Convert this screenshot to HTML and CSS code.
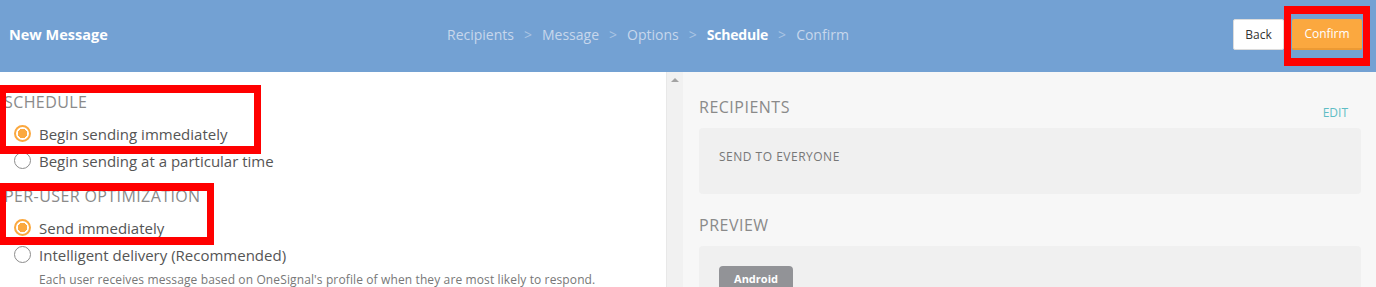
FILE: index.html
```html
<!DOCTYPE html>
<html>
<head>
<meta charset="utf-8">
<title>New Message</title>
<link rel="stylesheet" href="styles.css">
</head>
<body>
    <header class="topbar">
        <div class="title">New Message</div>
        <nav class="steps">
            <span class="step">Recipients</span>
            <span class="sep">&gt;</span>
            <span class="step">Message</span>
            <span class="sep">&gt;</span>
            <span class="step">Options</span>
            <span class="sep">&gt;</span>
            <span class="step active">Schedule</span>
            <span class="sep">&gt;</span>
            <span class="step">Confirm</span>
        </nav>
        <div class="actions">
            <button class="btn btn-back">Back</button>
            <button class="btn btn-confirm">Confirm</button>
        </div>
        <div class="mark mark-confirm"></div>
    </header>

    <main class="layout">
        <section class="form-pane">
            <h2 class="group-title">Schedule</h2>
            <label class="radio-row"><span class="radio checked"></span>Begin sending immediately</label>
            <label class="radio-row"><span class="radio"></span>Begin sending at a particular time</label>

            <h2 class="group-title second">Per-User Optimization</h2>
            <label class="radio-row"><span class="radio checked"></span>Send immediately</label>
            <label class="radio-row"><span class="radio"></span>Intelligent delivery (Recommended)</label>
            <p class="hint">Each user receives message based on OneSignal's profile of when they are most likely to respond.</p>

            <div class="mark mark-schedule"></div>
            <div class="mark mark-optimize"></div>
        </section>

        <div class="scrollbar"><span class="arrow-up"></span></div>

        <section class="summary-pane">
            <div class="summary-head">
                <h3>Recipients</h3>
                <a class="edit">EDIT</a>
            </div>
            <div class="summary-box recipients-box">SEND TO EVERYONE</div>

            <div class="summary-head preview-head">
                <h3>Preview</h3>
            </div>
            <div class="summary-box preview-box">
                <span class="platform-tab">Android</span>
            </div>
        </section>
    </main>
</body>
</html>
```

FILE: styles.css
```css
html, body {
    margin: 0;
    height: 100%;
    overflow: hidden;
}

body {
    font-family: "Open Sans", "Liberation Sans", sans-serif;
    background: #ffffff;
    color: #555;
}

.topbar {
    position: relative;
    height: 72px;
    background: #73a1d3;
    display: flex;
    align-items: center;
    padding: 0 14px 0 9px;
}

.title {
    flex: 0 0 438px;
    color: #fff;
    font-weight: 700;
    font-size: 14.5px;
    margin-top: -3px;
}

.steps {
    display: flex;
    align-items: center;
    gap: 10px;
    font-size: 14px;
    color: #c7d7ec;
    margin-top: -4px;
}

.steps .active {
    color: #fff;
    font-weight: 700;
    letter-spacing: -0.2px;
}

.steps .sep {
    color: #aac4e3;
}

.actions {
    margin-left: auto;
    display: flex;
    gap: 8px;
    margin-top: -3px;
}

.btn {
    font-family: inherit;
    font-size: 12px;
    height: 31px;
    border-radius: 2px;
    padding: 0;
    cursor: pointer;
}

.btn-back {
    width: 51px;
    background: #fff;
    color: #333;
    border: 1px solid #dcdcdc;
}

.btn-confirm {
    width: 70px;
    background: #fba83f;
    color: #fff;
    border: 0;
    border-bottom: 2px solid #ec9a34;
}

.mark {
    position: absolute;
    border: 8px solid #ff0000;
    border-left-width: 7px;
    border-right-width: 7px;
    box-sizing: border-box;
    pointer-events: none;
}

.mark-confirm {
    left: 1284px;
    top: 6px;
    width: 86px;
    height: 60px;
}

.layout {
    display: flex;
    height: 215px;
    overflow: hidden;
}

.form-pane {
    position: relative;
    flex: 0 0 662px;
    padding: 20px 0 0 4px;
    background: #fff;
}

.group-title {
    margin: 0 0 8px 0;
    font-size: 16px;
    line-height: 20px;
    letter-spacing: 0.4px;
    font-weight: 400;
    text-transform: uppercase;
    color: #8a8a8a;
}

.group-title.second {
    margin-top: 12px;
}

.radio-row {
    display: flex;
    align-items: center;
    height: 27px;
    padding-left: 10px;
    font-size: 15px;
    color: #555;
}

.radio {
    box-sizing: border-box;
    width: 17px;
    height: 17px;
    border-radius: 50%;
    border: 1.5px solid #8c8c8c;
    margin-right: 8px;
    background: #fff;
}

.radio.checked {
    border: 2px solid #fba83f;
    background: radial-gradient(circle, #fba83f 0 4.5px, #fff 5px);
}

.hint {
    margin: 5px 0 0 35px;
    font-size: 12px;
    line-height: 13px;
    letter-spacing: 0.12px;
    color: #777;
}

.mark-schedule {
    left: -1px;
    top: 13px;
    width: 262px;
    height: 69px;
}

.mark-optimize {
    left: -1px;
    top: 111px;
    width: 215px;
    height: 62px;
}

.scrollbar {
    flex: 0 0 17px;
    background: #f1f1f1;
    border-left: 1px solid #e8e8e8;
    display: flex;
    justify-content: center;
    padding-top: 6px;
    box-sizing: border-box;
}

.arrow-up {
    width: 0;
    height: 0;
    border-left: 4px solid transparent;
    border-right: 4px solid transparent;
    border-bottom: 4px solid #a3a3a3;
}

.summary-pane {
    flex: 1;
    background: #f7f7f7;
    padding: 26px 15px 0 16px;
}

.summary-head {
    display: flex;
    justify-content: space-between;
    align-items: flex-start;
    height: 30px;
}

.summary-head h3 {
    margin: 0;
    font-size: 16px;
    line-height: 18px;
    letter-spacing: 0.5px;
    font-weight: 400;
    text-transform: uppercase;
    color: #8a8a8a;
}

.edit {
    font-size: 12px;
    line-height: 14px;
    padding-top: 8px;
    margin-right: 13px;
    color: #5fbdc5;
}

.summary-box {
    background: #f0f0f0;
    border-radius: 4px;
    box-sizing: border-box;
}

.recipients-box {
    height: 66px;
    padding: 22px 20px 0 20px;
    font-size: 12px;
    line-height: 14px;
    letter-spacing: 0.5px;
    color: #777;
}

.preview-head {
    margin-top: 22px;
}

.preview-box {
    height: 60px;
    padding: 20px 20px 0 20px;
}

.platform-tab {
    display: inline-block;
    width: 74px;
    height: 26px;
    line-height: 26px;
    text-align: center;
    background: #929397;
    border-radius: 4px;
    color: #fff;
    font-size: 11px;
    font-weight: 700;
}
```
